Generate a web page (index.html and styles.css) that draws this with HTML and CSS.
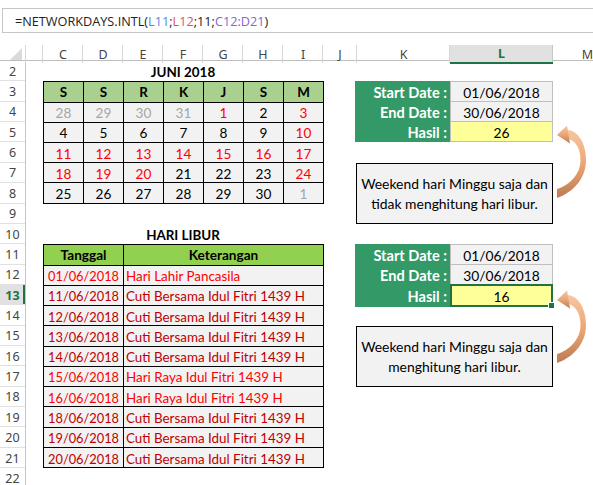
FILE: index.html
```html
<!DOCTYPE html>
<html>
<head>
<meta charset="utf-8">
<link rel="stylesheet" href="styles.css">
</head>
<body>
<div class="fbar">
  <div class="fx">=NETWORKDAYS.INTL(<span class="r1">L11</span>;<span class="r2">L12</span>;11;<span class="r3">C12:D21</span>)</div>
</div>
<div class="sheet">
  <div class="colheads">
    <div class="ch corner"><svg width="14" height="14" viewBox="0 0 14 14"><polygon points="13,1 13,13 1,13" fill="#dadada"/></svg></div>
    <div class="ch"></div>
    <div class="ch">C</div><div class="ch">D</div><div class="ch">E</div><div class="ch">F</div><div class="ch">G</div><div class="ch">H</div><div class="ch">I</div>
    <div class="ch">J</div><div class="ch">K</div><div class="ch sel">L</div><div class="ch">M</div>
  </div>
  <div class="rowheads">
    <div class="rh">2</div><div class="rh">3</div><div class="rh">4</div><div class="rh">5</div><div class="rh">6</div><div class="rh">7</div><div class="rh">8</div><div class="rh">9</div><div class="rh">10</div><div class="rh">11</div><div class="rh">12</div><div class="rh sel">13</div><div class="rh">14</div><div class="rh">15</div><div class="rh">16</div><div class="rh">17</div><div class="rh">18</div><div class="rh">19</div><div class="rh">20</div><div class="rh">21</div><div class="rh">22</div>
  </div>

  <div class="title cal-title">JUNI 2018</div>
  <div class="cal">
    <div class="dh">S</div><div class="dh">S</div><div class="dh">R</div><div class="dh">K</div><div class="dh">J</div><div class="dh">S</div><div class="dh">M</div>
    <div class="d g">28</div><div class="d g">29</div><div class="d g">30</div><div class="d g">31</div><div class="d r">1</div><div class="d">2</div><div class="d r">3</div>
    <div class="d">4</div><div class="d">5</div><div class="d">6</div><div class="d">7</div><div class="d">8</div><div class="d">9</div><div class="d r">10</div>
    <div class="d r">11</div><div class="d r">12</div><div class="d r">13</div><div class="d r">14</div><div class="d r">15</div><div class="d r">16</div><div class="d r">17</div>
    <div class="d r">18</div><div class="d r">19</div><div class="d r">20</div><div class="d">21</div><div class="d">22</div><div class="d">23</div><div class="d r">24</div>
    <div class="d">25</div><div class="d">26</div><div class="d">27</div><div class="d">28</div><div class="d">29</div><div class="d">30</div><div class="d g">1</div>
  </div>

  <div class="title hol-title">HARI LIBUR</div>
  <div class="hol">
    <div class="hh">Tanggal</div><div class="hh">Keterangan</div>
    <div class="hd r">01/06/2018</div><div class="hk r">Hari Lahir Pancasila</div>
    <div class="hd dr">11/06/2018</div><div class="hk dr">Cuti Bersama Idul Fitri 1439 H</div>
    <div class="hd dr">12/06/2018</div><div class="hk dr">Cuti Bersama Idul Fitri 1439 H</div>
    <div class="hd dr">13/06/2018</div><div class="hk dr">Cuti Bersama Idul Fitri 1439 H</div>
    <div class="hd dr">14/06/2018</div><div class="hk dr">Cuti Bersama Idul Fitri 1439 H</div>
    <div class="hd r">15/06/2018</div><div class="hk r">Hari Raya Idul Fitri 1439 H</div>
    <div class="hd r">16/06/2018</div><div class="hk r">Hari Raya Idul Fitri 1439 H</div>
    <div class="hd dr">18/06/2018</div><div class="hk dr">Cuti Bersama Idul Fitri 1439 H</div>
    <div class="hd dr">19/06/2018</div><div class="hk dr">Cuti Bersama Idul Fitri 1439 H</div>
    <div class="hd dr">20/06/2018</div><div class="hk dr">Cuti Bersama Idul Fitri 1439 H</div>
  </div>

  <div class="info info1">
    <div class="lab">Start Date :</div><div class="val">01/06/2018</div>
    <div class="lab">End Date :</div><div class="val">30/06/2018</div>
    <div class="lab">Hasil :</div><div class="val res">26</div>
  </div>
  <div class="note note1">Weekend hari Minggu saja dan<br>tidak menghitung hari libur.</div>
  <div class="arrow arrow1">
    <svg width="40" height="82" viewBox="0 0 40 82">
      <defs>
        <linearGradient id="ag1" x1="0" y1="0" x2="0" y2="1">
          <stop offset="0" stop-color="#f8c6a0"/>
          <stop offset="0.5" stop-color="#eba677"/>
          <stop offset="1" stop-color="#bd7b50"/>
        </linearGradient>
      </defs>
      <path d="M14,8 C24,8 33,20 33,38 C33,56 21,70 4,76 L4,67 C17,63 27.5,52 27.5,38 C27.5,26 22,18 15,17 Z" fill="url(#ag1)"/>
      <polygon points="4,13 14,3.5 17,21.5" fill="url(#ag1)"/>
    </svg>
  </div>

  <div class="info info2">
    <div class="lab">Start Date :</div><div class="val">01/06/2018</div>
    <div class="lab">End Date :</div><div class="val">30/06/2018</div>
    <div class="lab">Hasil :</div><div class="val res active">16</div>
  </div>
  <div class="note note2">Weekend hari Minggu saja dan<br>menghitung hari libur.</div>
  <div class="arrow arrow2">
    <svg width="40" height="82" viewBox="0 0 40 82">
      <defs>
        <linearGradient id="ag2" x1="0" y1="0" x2="0" y2="1">
          <stop offset="0" stop-color="#f8c6a0"/>
          <stop offset="0.5" stop-color="#eba677"/>
          <stop offset="1" stop-color="#bd7b50"/>
        </linearGradient>
      </defs>
      <path d="M14,8 C24,8 33,20 33,38 C33,56 21,70 4,76 L4,67 C17,63 27.5,52 27.5,38 C27.5,26 22,18 15,17 Z" fill="url(#ag2)"/>
      <polygon points="4,13 14,3.5 17,21.5" fill="url(#ag2)"/>
    </svg>
  </div>
</div>
</body>
</html>
```
FILE: styles.css
```css
html, body {
  margin: 0;
  padding: 0;
}
body {
  width: 593px;
  height: 485px;
  overflow: hidden;
  background: #fff;
  font-family: Lato, "Noto Sans", sans-serif;
  color: #000;
}

/* formula bar */
.fbar {
  height: 34px;
  padding-top: 8px;
}
.fx {
  margin-left: 2px;
  height: 23px;
  border: 1px solid #c6c6c6;
  border-right: none;
  display: flex;
  align-items: center;
  padding-left: 12px;
  font-family: "Open Sans", "Noto Sans", sans-serif;
  font-size: 12.7px;
  color: #222;
  white-space: pre;
}
.r1 { color: #4a8fe0; }
.r2 { color: #e0555a; }
.r3 { color: #8b62d0; }

/* sheet grid */
.sheet {
  width: 593px;
  height: 443px;
  overflow: hidden;
  display: grid;
  grid-template-columns: 26px 17px repeat(7, 40px) 34px 93px 103px 40px;
  grid-template-rows: 19px repeat(21, 20.37px);
}

.colheads {
  grid-column: 1 / -1;
  grid-row: 1;
  display: grid;
  grid-template-columns: 26px 17px repeat(7, 40px) 34px 93px 103px 40px;
  border-bottom: 1px solid #bdbdbd;
  box-sizing: border-box;
}
.ch {
  position: relative;
  display: flex;
  align-items: center;
  justify-content: center;
  padding-top: 3px;
  font-family: "Noto Sans", "Open Sans", sans-serif;
  font-size: 12.5px;
  color: #444;
}
.ch:last-child {
  justify-content: flex-end;
  overflow: hidden;
}
.ch:last-child::after {
  display: none;
}
.ch::after {
  content: "";
  position: absolute;
  right: 0;
  top: 3px;
  bottom: 0;
  width: 1px;
  background: #d6d6d6;
}
.ch.corner {
  align-items: flex-end;
  justify-content: flex-end;
  padding: 0 3px 2px 0;
}
.ch.sel {
  background: #e1e1e1;
  color: #217346;
  font-weight: bold;
  margin-top: 3px;
  padding-top: 0;
  border-bottom: 2px solid #217346;
  margin-bottom: -1px;
}
.ch.sel::after {
  top: 0;
  background: #c6c6c6;
}

.rowheads {
  grid-column: 1;
  grid-row: 2 / 23;
  display: grid;
  grid-template-rows: repeat(21, 20.37px);
  border-right: 1px solid #c4c4c4;
}
.rh {
  display: flex;
  align-items: center;
  justify-content: center;
  padding-top: 1px;
  box-sizing: border-box;
  border-bottom: 1px solid #e1e1e1;
  font-family: "Noto Sans", "Open Sans", sans-serif;
  font-size: 12.5px;
  color: #444;
}
.rh.sel {
  background: #e1e1e1;
  color: #217346;
  font-weight: bold;
  box-shadow: inset -2px 0 0 #217346;
}

/* titles */
.title {
  grid-column: 3 / 10;
  display: flex;
  align-items: center;
  justify-content: center;
  font-weight: bold;
  font-size: 13.4px;
  padding-top: 1px;
}
.cal-title { grid-row: 2; }
.hol-title { grid-row: 10; }

/* calendar */
.cal {
  grid-column: 3 / 10;
  grid-row: 3 / 9;
  display: grid;
  grid-template-columns: repeat(7, 1fr);
  grid-template-rows: repeat(6, 1fr);
  gap: 1px;
  background: #000;
  border: 1px solid #000;
  margin-right: -1px;
}
.dh {
  background: #a9d08e;
  font-weight: bold;
  font-size: 13.4px;
  display: flex;
  align-items: center;
  justify-content: center;
  padding-top: 1px;
}
.d {
  background: #f2f2f2;
  font-size: 13.6px;
  display: flex;
  align-items: center;
  justify-content: center;
  padding-top: 2px;
}
.g { color: #a6a6a6; }
.r { color: #ff0000; }
.dr { color: #c00000; }

/* holidays */
.hol {
  grid-column: 3 / 10;
  grid-row: 11 / 22;
  display: grid;
  grid-template-columns: 79px 1fr;
  grid-template-rows: repeat(11, 1fr);
  gap: 1px;
  background: #000;
  border: 1px solid #000;
  margin-right: -1px;
}
.hh {
  background: #92d050;
  font-weight: bold;
  font-size: 13.6px;
  display: flex;
  align-items: center;
  justify-content: center;
  padding-top: 1px;
}
.hd, .hk {
  background: #f2f2f2;
  display: flex;
  align-items: center;
  padding-top: 2px;
}
.hd {
  font-size: 12.8px;
  justify-content: flex-end;
  padding-right: 4px;
}
.hk {
  font-size: 13.4px;
  padding-left: 2px;
}

/* info boxes */
.info {
  grid-column: 11 / 13;
  display: grid;
  grid-template-columns: 95px 103px;
  grid-template-rows: repeat(3, 1fr);
  margin-left: -2px;
}
.info1 { grid-row: 3 / 6; }
.info2 { grid-row: 11 / 14; }
.lab {
  background: #339966;
  color: #fff;
  font-weight: bold;
  font-size: 14.6px;
  display: flex;
  align-items: center;
  justify-content: flex-end;
  padding-right: 3px;
  padding-top: 1px;
}
.val {
  position: relative;
  background: #f2f2f2;
  font-size: 13.8px;
  display: flex;
  align-items: center;
  justify-content: center;
  padding-top: 2px;
  border: 1px solid #bfbfbf;
  border-top: none;
  box-sizing: border-box;
}
.val:nth-child(2) {
  border-top: 1px solid #bfbfbf;
}
.val.res {
  background: #ffff99;
}
.val.active {
  border: 2px solid #217346;
  margin-top: -1px;
}
.val.active::after {
  content: "";
  position: absolute;
  right: -4px;
  bottom: -4px;
  width: 5px;
  height: 5px;
  background: #217346;
  border: 1px solid #fff;
}

/* notes */
.note {
  grid-column: 11 / 13;
  background: #f2f2f2;
  border: 1px solid #000;
  display: flex;
  align-items: center;
  justify-content: center;
  text-align: center;
  font-size: 13.9px;
  line-height: 20px;
  margin-left: -1px;
  padding-top: 1px;
}
.note1 { grid-row: 7 / 10; }
.note2 { grid-row: 15 / 18; }

/* arrows */
.arrow {
  grid-column: 13;
}
.arrow svg {
  display: block;
  overflow: visible;
}
.arrow1 { grid-row: 5 / 9; }
.arrow2 { grid-row: 13 / 17; margin-top: 2px; }
```
